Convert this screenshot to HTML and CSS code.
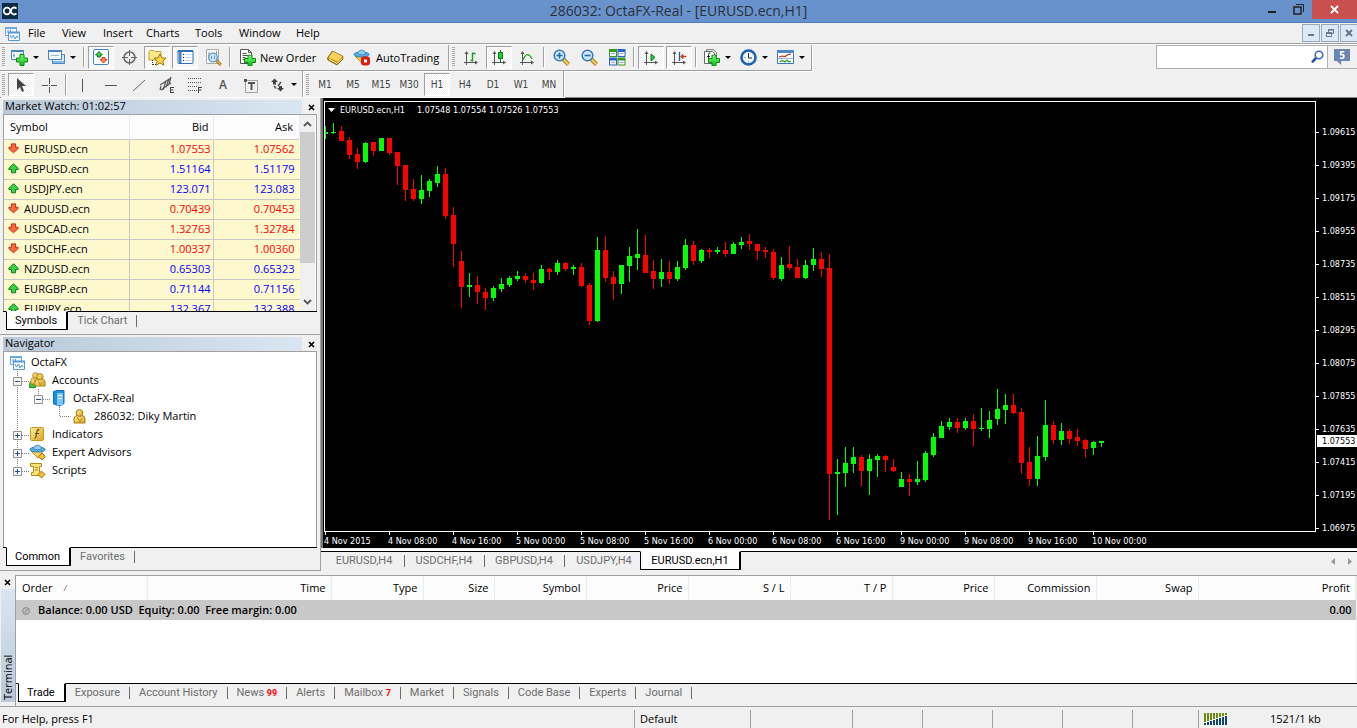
FILE: index.html
```html
<!DOCTYPE html>
<html lang="en">
<head>
<meta charset="utf-8">
<title>286032: OctaFX-Real - [EURUSD.ecn,H1]</title>
<link rel="stylesheet" href="styles.css">
</head>
<body>
<svg class="defs" aria-hidden="true">
  <defs>
    <linearGradient id="gold" x1="0" y1="0" x2="1" y2="1"><stop offset="0" stop-color="#fdf0a0"/><stop offset="1" stop-color="#d9a520"/></linearGradient>
    <linearGradient id="plusg" x1="0" y1="0" x2="0" y2="1"><stop offset="0" stop-color="#7dff70"/><stop offset="1" stop-color="#10b818"/></linearGradient>
    <symbol id="plus" viewBox="0 0 12 12"><path d="M4 .5h4V4h3.500v4H8v3.500H4V8H.5V4H4z" fill="url(#plusg)" stroke="#0a8a14"/></symbol>
    <symbol id="charts" viewBox="0 0 15 15"><path d="M.5 1.500h11v8H.5z" fill="#eef6fd" stroke="#6ea6de"/><path d="M0 2h12" stroke="#6ea6de" stroke-width="2"/><path d="M3 4v3M5.500 4v2" stroke="#5b96d6"/><path d="M3.500 6.500h11v8h-11z" fill="#f4f9fe" stroke="#5b96d6"/><path d="M3 6.500h12" stroke="#5b96d6" stroke-width="2"/><path d="M5 9l1.500 3 2-3 1.500 4 2-3 1 2" fill="none" stroke="#5b96d6"/></symbol>
    <symbol id="up" viewBox="0 0 11 11"><path d="M5.500.7l4.600 4.600v1.200H7.600v3.300H3.400V6.500H.9V5.300z" fill="#3ccf48" stroke="#0d7a1c"/></symbol>
    <symbol id="down" viewBox="0 0 11 11"><path d="M5.500 9.800L.9 5.600V4.300h2.500V.9h4.200v3.400h2.500v1.300z" fill="#ff6a3c" stroke="#b23210"/></symbol>
    <symbol id="axes" viewBox="0 0 16 16"><path d="M3.500 15V3M1 12.500h13" fill="none" stroke="#555"/><path d="M3.500 1L1.500 4h4zM15 12.500l-3-2v4z" fill="#555"/></symbol>
    <symbol id="lens" viewBox="0 0 17 17"><path d="M10 10l5.500 5.500" stroke="#a67d14" stroke-width="4"/><path d="M10 10l5.500 5.500" stroke="#f4d060" stroke-width="2"/><circle cx="6.500" cy="6.500" r="5.300" fill="#cdeafa" stroke="#3678bc" stroke-width="1.500"/></symbol>
    <symbol id="hat" viewBox="0 0 17 17"><path d="M2 7h12l-5 7z" fill="#f7d058" stroke="#b98a18"/><ellipse cx="8.500" cy="5.500" rx="7.500" ry="2.500" fill="#5cb2e6" stroke="#2a7cb4"/><path d="M4.500 5c0-5 8-5 8 0-2 1-6 1-8 0z" fill="#8ed0f4" stroke="#2a7cb4" stroke-width=".8"/></symbol>
    <symbol id="user" viewBox="0 0 13 15"><path d="M1 14V10q0-3 3-3.500h5q3 .5 3 3.500v4z" fill="url(#gold)" stroke="#a67c10"/><circle cx="6.500" cy="4" r="3.400" fill="url(#gold)" stroke="#a67c10"/><path d="M4 8l3 5 2-4" fill="none" stroke="#b98a18"/></symbol>
    <symbol id="x" viewBox="0 0 7 7"><path d="M1 1l5 5M6 1L1 6" stroke="currentColor" stroke-width="1.600"/></symbol>
  </defs>
</svg>

<header class="titlebar">
  <svg class="logo" viewBox="0 0 16 16" aria-hidden="true"><path d="M0 0h16v16H0z" fill="#0c2a42"/><circle cx="5" cy="8" r="3.300" fill="none" stroke="#fff" stroke-width="1.700"/><path d="M14.500 5.600a3.300 3.300 0 1 0 0 4.800" fill="none" stroke="#fff" stroke-width="1.700"/></svg>
  <h1>286032: OctaFX-Real - [EURUSD.ecn,H1]</h1>
  <div class="winbtns">
    <button aria-label="Minimize"><svg width="12" height="14" viewBox="0 0 12 14"><path d="M1 10h8v2H1z" fill="#222"/></svg></button>
    <button aria-label="Restore"><svg width="12" height="14" viewBox="0 0 12 14"><path d="M1 6h7v7H1z" fill="none" stroke="#222" stroke-width="1.500"/><path d="M3 3.500h7.500V11" fill="none" stroke="#222"/></svg></button>
    <button class="close" aria-label="Close"><svg width="9" height="9" viewBox="0 0 9 9"><path d="M1 1l7 7M8 1L1 8" stroke="#fff" stroke-width="1.800"/></svg></button>
  </div>
</header>

<nav class="menubar">
  <svg width="15" height="15"><use href="#charts"/></svg>
  <button class="m-file">File</button><button class="m-view">View</button><button class="m-insert">Insert</button><button class="m-charts">Charts</button><button class="m-tools">Tools</button><button class="m-window">Window</button><button>Help</button>
  <div class="mdi">
    <button aria-label="Minimize chart"><svg width="10" height="10"><path d="M2 6h6v2H2z" fill="#66788c"/></svg></button>
    <button aria-label="Restore chart"><svg width="10" height="10"><path d="M1.500 4.500h5v4h-5zM3.500 4V1.500h5v4H7" fill="none" stroke="#66788c"/><path d="M1 4h6v2H1zM3 1h6v1.500H3z" fill="#66788c"/></svg></button>
    <button aria-label="Close chart"><svg width="10" height="10"><path d="M2 2l6 6M8 2L2 8" stroke="#66788c" stroke-width="2"/></svg></button>
  </div>
</nav>

<div class="toolrow">
  <div class="group">
    <i class="grip"></i>
    <button class="split" aria-label="New chart"><svg width="17" height="17"><path d="M.5 1.500h12v9H.5z" fill="#f3f9fe" stroke="#4a83be"/><path d="M0 2h13" stroke="#4a83be" stroke-width="2"/><path d="M3 4.500v4M2 6.500h2M10 4v3" stroke="#6a9bd0"/><use href="#plus" x="5" y="5" width="12" height="12"/></svg><b class="arr"></b></button>
    <button class="split" aria-label="Profiles"><svg width="17" height="17"><path d="M4.500 5.500h12v9h-12z" fill="#d9eafa" stroke="#4a83be"/><path d="M5 13h11" stroke="#8bb8e4" stroke-width="2"/><path d="M.5 1.500h13v9H.5z" fill="#f3f9fe" stroke="#4a83be"/><path d="M0 2h14" stroke="#4a83be" stroke-width="2"/><path d="M3 6.500h8" stroke="#8bb8e4"/></svg><b class="arr"></b></button>
    <i class="sep"></i>
    <button class="tool on" aria-label="Market Watch"><svg width="17" height="17"><rect x=".5" y=".5" width="15" height="15" rx="1.500" fill="#fff" stroke="#3c86c8"/><path d="M6 2.500L2.500 6h2v2h3V6h2z" fill="#3ccf48" stroke="#0d7a1c"/><path d="M10.500 14L14 10.500h-2v-2H9v2H7z" fill="#ff8a5c" stroke="#c8401c"/></svg></button>
    <button class="tool" aria-label="Data Window"><svg width="17" height="17"><circle cx="8.500" cy="8.500" r="5.500" fill="none" stroke="#666" stroke-width="1.500"/><path d="M8.500 1v6M8.500 10v6M1 8.500h6M10 8.500h6" stroke="#666"/></svg></button>
    <button class="tool on" aria-label="Navigator"><svg width="19" height="17"><path d="M1 2.500l1-1h4l1 1h6V11H1z" fill="#fbe88c" stroke="#c9a02c"/><path d="M4.500 11v6M5 15.500h3" stroke="#333" stroke-dasharray="1 1"/><path d="M12 5l1.800 3.800 4.200.4-3.200 2.800 1 4.200L12 14l-3.800 2.200 1-4.200L6 9.200l4.200-.4z" fill="#ffd84a" stroke="#a07808"/></svg></button>
    <button class="tool on" aria-label="Terminal"><svg width="17" height="17"><rect x="1" y="1.500" width="15" height="13" rx="1" fill="#fff" stroke="#2d6fb4"/><path d="M1 2h15" stroke="#2d6fb4" stroke-width="2"/><path d="M2 3h2.500v11H2z" fill="#3e86cc"/><path d="M6 5.500h1M6 8.500h1M6 11.500h1" stroke="#222"/><path d="M8 5.500h6.500M8 8.500h6.500M8 11.500h6.500" stroke="#bcd8f2"/></svg></button>
    <button class="tool" aria-label="Strategy Tester"><svg width="17" height="17"><path d="M1.500.5h12v14h-12z" fill="#f8f8f8" stroke="#aaa"/><path d="M4 3v6M11.500 2v4M3 6h2" stroke="#999"/><path d="M11 11l5 5" stroke="#a67d14" stroke-width="3"/><path d="M11 11l5 5" stroke="#f4d060"/><circle cx="8" cy="8.500" r="4.300" fill="#cde6fa" stroke="#5a96d0" stroke-width="1.300"/><path d="M6.500 10V7M9.500 10V6.500" stroke="#5a96d0"/></svg></button>
    <i class="sep"></i>
    <button class="wide"><svg width="17" height="17"><path d="M1.500.5h8l3 3v11h-11z" fill="#fff" stroke="#555"/><path d="M9.500.5v3h3M3.500 4.500h4M3.500 6.500h6M3.500 8.500h3M3.500 10.500h2" fill="none" stroke="#555"/><use href="#plus" x="5" y="5.500" width="12" height="12"/></svg>New Order</button>
    <button class="tool" aria-label="MetaEditor"><svg width="17" height="17"><path d="M.5 9l5-7 10.500 5.500-.5 3-5.500 5.500-9-5z" fill="#c48a14" stroke="#946408"/><path d="M1.500 8.500l4.500-6 9.500 5-5 5z" fill="#fbd35c"/><path d="M2 10l8 4.500 5-5" fill="none" stroke="#fff3b8"/></svg></button>
    <button class="auto"><svg width="18" height="17"><use href="#hat" width="17" height="17"/><rect x="8" y="7.500" width="9" height="9" rx="3" fill="#d8200c"/><path d="M11 10.500h3v3h-3z" fill="#fff"/></svg>AutoTrading</button>
  </div>
  <div class="group">
    <i class="grip"></i>
    <button class="tool" aria-label="Bar Chart"><svg width="16" height="16"><use href="#axes"/><path d="M9.500 2.500v9M9.500 10.500H7.500M9.500 3.500h3" stroke="#1c9a28" stroke-width="1.400" fill="none"/></svg></button>
    <button class="tool on" aria-label="Candlesticks"><svg width="16" height="16"><use href="#axes"/><path d="M9.500 0v12" stroke="#0a7a14"/><path d="M7.500 2.500h4v6h-4z" fill="#22cc30" stroke="#0a7a14"/></svg></button>
    <button class="tool" aria-label="Line Chart"><svg width="16" height="16"><use href="#axes"/><path d="M4 10c3-7 6-7 9-1" stroke="#1c9a28" fill="none" stroke-width="1.200"/></svg></button>
    <i class="sep"></i>
    <button class="tool" aria-label="Zoom In"><svg width="17" height="17"><use href="#lens"/><path d="M3.500 6.500h6M6.500 3.500v6" stroke="#2468b0" stroke-width="1.600"/></svg></button>
    <button class="tool" aria-label="Zoom Out"><svg width="17" height="17"><use href="#lens"/><path d="M3.500 6.500h6" stroke="#2468b0" stroke-width="1.600"/></svg></button>
    <button class="tool" aria-label="Tile Windows"><svg width="17" height="17"><path d="M0 0h8v8H0zM8.500 8.500h8v8h-8z" fill="#3a9a1c"/><path d="M8.500 0h8v8h-8zM0 8.500h8v8H0z" fill="#2c62cc"/><path d="M1 3h6v4H1zM9.500 3h6v4h-6zM1 11.500h6v4H1zM9.500 11.500h6v4h-6z" fill="#f2f6fa"/><path d="M2 4.500h4M10.500 4.500h4M2 13.500h4M10.500 13.500h4" stroke="#9ab"/></svg></button>
    <i class="sep"></i>
    <button class="tool on" aria-label="Auto Scroll"><svg width="16" height="16"><use href="#axes"/><path d="M8 4l4 3.500L8 11z" fill="#28c838" stroke="#0a7a14"/></svg></button>
    <button class="tool on" aria-label="Chart Shift"><svg width="16" height="16"><use href="#axes"/><path d="M8.500 2v9" stroke="#1a64a8" stroke-width="1.400"/><path d="M9.500 6.500L12 4v2h3v1h-3v2z" fill="#c8401c" stroke="#c8401c" stroke-width=".6"/></svg></button>
    <i class="sep"></i>
    <button class="split" aria-label="Indicators"><svg width="17" height="17"><path d="M3.500.5h7l3 3v9h-10z" fill="#ddd" stroke="#888"/><path d="M1.500 2.500h8l2 2v10h-10z" fill="#fff" stroke="#666"/><path d="M7.500 4q-2-1-2 2v5M4 7.500h3" fill="none" stroke="#333"/><use href="#plus" x="5" y="5.500" width="12" height="12"/></svg><b class="arr"></b></button>
    <button class="split" aria-label="Periods"><svg width="17" height="17"><circle cx="8.500" cy="8.500" r="7" fill="#eef5fb" stroke="#1c62b4" stroke-width="2.600"/><path d="M8.500 4v5h3.500" fill="none" stroke="#333"/><path d="M4.500 8.500h1M8.500 12.500v1" stroke="#777"/></svg><b class="arr"></b></button>
    <button class="split" aria-label="Templates"><svg width="17" height="17"><path d="M.5 1.500h16v13H.5z" fill="#fff" stroke="#3c78b4"/><path d="M0 2.500h17" stroke="#4a8ac8" stroke-width="3"/><path d="M2 8l3-1 3 .5 3-2 3-.5" fill="none" stroke="#b03018" stroke-width="1.200"/><path d="M1 9.500h15" stroke="#9ab8d4"/><path d="M3 13l2-1.500 3 1.500 2-2 2 2 2-1" fill="none" stroke="#2c9a30" stroke-width="1.200"/></svg><b class="arr"></b></button>
  </div>
  <div class="search">
    <input type="text" aria-label="Search">
    <svg width="13" height="13" aria-hidden="true"><circle cx="8" cy="5" r="3.800" fill="#fff" stroke="#3e68c0" stroke-width="1.600"/><path d="M5 8l-4 4.300" stroke="#2c50b8" stroke-width="2.600"/></svg>
    <button class="chat" aria-label="Community messages"><span>5</span></button>
  </div>
</div>

<div class="toolrow second">
  <div class="group">
    <i class="grip"></i>
    <button class="tool on" aria-label="Cursor"><svg width="16" height="16"><path d="M4 1v12l3-3 2 5 2-1-2-5h4z" fill="#444"/></svg></button>
    <button class="tool" aria-label="Crosshair"><svg width="16" height="16"><path d="M8.500 1v6M8.500 10v6M1 8.500h6M10 8.500h6M8 8.500h1" stroke="#555"/></svg></button>
    <i class="sep"></i>
    <button class="tool" aria-label="Vertical Line"><svg width="16" height="16"><path d="M7.500 2v13" stroke="#555"/></svg></button>
    <button class="tool" aria-label="Horizontal Line"><svg width="16" height="16"><path d="M2 8.500h12" stroke="#555"/></svg></button>
    <button class="tool" aria-label="Trendline"><svg width="16" height="16"><path d="M2 14L14 3" stroke="#666"/></svg></button>
    <button class="tool" aria-label="Equidistant Channel"><svg width="16" height="18"><path d="M1 9L12 2M2 14l10-7M4 14L7 5M7 11l3-8M10 8l2-7M2 10l-1 4" stroke="#555" stroke-width="1.200"/><path d="M11.500 11.500V17M11 11.500h4M11 14h3.500M11 16.500h4" stroke="#444"/></svg></button>
    <button class="tool" aria-label="Fibonacci Retracement"><svg width="16" height="18"><path d="M1 2.500h14M1 6.500h14M1 10.500h9M1 14.500h9" stroke="#555" stroke-dasharray="1 1"/><path d="M11.500 11V17M11 11.500h4M11 14h3.500" stroke="#444"/></svg></button>
    <button class="tool letter">A</button>
    <button class="tool" aria-label="Text Label"><svg width="16" height="16"><path d="M2.500 3.500h12v12h-12z" fill="none" stroke="#555" stroke-dasharray="1 1"/><path d="M1 2h3v3H1z" fill="#555"/><path d="M5 6h7M8.500 6v7" stroke="#555" stroke-width="2"/></svg></button>
    <button class="split" aria-label="Arrows"><svg width="17" height="16"><path d="M5.500 1.500L9 5H7v2.500H4V5H2zM11.500 14.500L8 11h2V9h3v2h2z" fill="#444"/><path d="M5 9l2 2.500M9 9l3-4" fill="none" stroke="#555" stroke-width="1.600"/></svg><b class="arr"></b></button>
  </div>
  <div class="group frames">
    <i class="grip"></i>
    <button class="tool">M1</button><button class="tool">M5</button><button class="tool">M15</button><button class="tool">M30</button><button class="tool on">H1</button><button class="tool">H4</button><button class="tool">D1</button><button class="tool">W1</button><button class="tool">MN</button>
  </div>
</div>

<main class="work">
  <aside class="side">
    <section class="panel">
      <div class="cap"><h2>Market Watch: 01:02:57</h2><button aria-label="Close Market Watch"><svg width="7" height="7"><use href="#x"/></svg></button></div>
      <div class="frame watch">
        <table>
          <colgroup><col class="c-sym"><col class="c-bid"><col></colgroup>
          <thead><tr><th>Symbol</th><th>Bid</th><th>Ask</th></tr></thead>
          <tbody>
            <tr class="dn"><td><svg width="11" height="11"><use href="#down"/></svg>EURUSD.ecn</td><td>1.07553</td><td>1.07562</td></tr>
            <tr><td><svg width="11" height="11"><use href="#up"/></svg>GBPUSD.ecn</td><td>1.51164</td><td>1.51179</td></tr>
            <tr><td><svg width="11" height="11"><use href="#up"/></svg>USDJPY.ecn</td><td>123.071</td><td>123.083</td></tr>
            <tr class="dn"><td><svg width="11" height="11"><use href="#down"/></svg>AUDUSD.ecn</td><td>0.70439</td><td>0.70453</td></tr>
            <tr class="dn"><td><svg width="11" height="11"><use href="#down"/></svg>USDCAD.ecn</td><td>1.32763</td><td>1.32784</td></tr>
            <tr class="dn"><td><svg width="11" height="11"><use href="#down"/></svg>USDCHF.ecn</td><td>1.00337</td><td>1.00360</td></tr>
            <tr><td><svg width="11" height="11"><use href="#up"/></svg>NZDUSD.ecn</td><td>0.65303</td><td>0.65323</td></tr>
            <tr><td><svg width="11" height="11"><use href="#up"/></svg>EURGBP.ecn</td><td>0.71144</td><td>0.71156</td></tr>
            <tr><td><svg width="11" height="11"><use href="#up"/></svg>EURJPY.ecn</td><td>132.367</td><td>132.388</td></tr>
          </tbody>
        </table>
        <div class="scroll" aria-hidden="true"><svg width="9" height="6"><path d="M1 5l3.500-3.500L8 5" fill="none" stroke="#555" stroke-width="1.800"/></svg><span></span><svg width="9" height="6"><path d="M1 1l3.500 3.500L8 1" fill="none" stroke="#555" stroke-width="1.800"/></svg></div>
      </div>
      <div class="tabs"><button class="act">Symbols</button><button>Tick Chart</button></div>
    </section>
    <section class="panel grow">
      <div class="cap"><h2>Navigator</h2><button aria-label="Close Navigator"><svg width="7" height="7"><use href="#x"/></svg></button></div>
      <div class="frame tree">
        <ul>
          <li><svg class="ico0" width="15" height="15"><use href="#charts"/></svg>OctaFX</li>
          <li><svg width="25" height="18"><path d="M13.500 0v18M18 10.500h7" class="dots"/><path d="M9.500 6.500h8v8h-8z" class="box"/><path d="M11 10.500h5" class="sign"/></svg><svg class="ico" width="17" height="17"><path d="M.5 15.500v-3q0-3 3-3.500h3v6.500z" fill="#3cc83c" stroke="#1c8a1c"/><use href="#user" x="1" y="0" width="11" height="13"/><use href="#user" x="5" y="0" width="12" height="16"/></svg>Accounts</li>
          <li><svg width="46" height="18"><path d="M13.500 0v18M34.500 0v7M39 10.500h7" class="dots"/><path d="M30.500 6.500h8v8h-8z" class="box"/><path d="M32 10.500h5" class="sign"/></svg><svg class="ico" width="17" height="17"><path d="M3.500 1.500L7 .5h7v13l-4 2.500-6.500-2z" fill="#1c90e0" stroke="#1470b4"/><path d="M7 3h6v12l-6 .5z" fill="#7cc8f8"/><path d="M8 5.500h4M8 8.500h4" stroke="#fff"/></svg>OctaFX-Real</li>
          <li><svg width="67" height="18"><path d="M13.500 0v18M55.500 0v9.500h11" class="dots"/></svg><svg class="ico" width="17" height="17"><use href="#user" x="2" y="1" width="13" height="15"/></svg>286032: Diky Martin</li>
          <li><svg width="25" height="18"><path d="M13.500 0v18M18 10.500h7" class="dots"/><path d="M9.500 6.500h8v8h-8z" class="box"/><path d="M11 10.500h5M13.500 8v5" class="sign"/></svg><svg class="ico" width="17" height="17"><rect x="1.500" y="1.500" width="13" height="13" rx="1" fill="url(#gold)" stroke="#c89820"/><path d="M10.500 4q-2-1-2.500 1.500l-1 5q-.3 2-1.500 1.500M6 7.500h4" fill="none" stroke="#6a4a00" stroke-width="1.200"/></svg>Indicators</li>
          <li><svg width="25" height="18"><path d="M13.500 0v18M18 10.500h7" class="dots"/><path d="M9.500 6.500h8v8h-8z" class="box"/><path d="M11 10.500h5M13.500 8v5" class="sign"/></svg><svg class="ico" width="17" height="17"><use href="#hat" width="17" height="17"/><path d="M13 9l3.500 3.500L13 16l-3.500-3.500z" fill="#f0bc3c" stroke="#a87810"/></svg>Expert Advisors</li>
          <li><svg width="25" height="18"><path d="M13.500 0v7M18 10.500h7" class="dots"/><path d="M9.500 6.500h8v8h-8z" class="box"/><path d="M11 10.500h5M13.500 8v5" class="sign"/></svg><svg class="ico" width="17" height="17"><path d="M1.500 1.500h11v3h-2v6h2v3h-10v-3h2v-6h-3z" fill="#fbe07c" stroke="#b98a18"/><path d="M6 5.500h3M6 8h3" stroke="#b98a18"/><path d="M12.500 9l3.500 3.500-3.500 3.500L9 12.500z" fill="#f0bc3c" stroke="#a87810"/></svg>Scripts</li>
        </ul>
      </div>
      <div class="tabs"><button class="act">Common</button><button>Favorites</button></div>
    </section>
  </aside>

  <section class="chartcol">
    <div class="chart">
      <div class="plot">
        <svg id="candles" width="990" height="429" shape-rendering="crispEdges" role="img" aria-label="EURUSD hourly candlesticks"></svg>
        <div class="legend"><svg width="7" height="4"><path d="M0 0h7L3.500 4z" fill="#fff"/></svg><span class="pair">EURUSD.ecn,H1</span><span>1.07548 1.07554 1.07526 1.07553</span></div>
      </div>
      <div class="prices"><span>1.09615</span><span>1.09395</span><span>1.09175</span><span>1.08955</span><span>1.08735</span><span>1.08515</span><span>1.08295</span><span>1.08075</span><span>1.07855</span><span>1.07635</span><span>1.07415</span><span>1.07195</span><span>1.06975</span><b>1.07553</b></div>
      <div class="times"><span>4 Nov 2015</span><span>4 Nov 08:00</span><span>4 Nov 16:00</span><span>5 Nov 00:00</span><span>5 Nov 08:00</span><span>5 Nov 16:00</span><span>6 Nov 00:00</span><span>6 Nov 08:00</span><span>6 Nov 16:00</span><span>9 Nov 00:00</span><span>9 Nov 08:00</span><span>9 Nov 16:00</span><span>10 Nov 00:00</span></div>
    </div>
    <div class="tabs charttabs"><button>EURUSD,H4</button><button>USDCHF,H4</button><button>GBPUSD,H4</button><button>USDJPY,H4</button><button class="act">EURUSD.ecn,H1</button>
      <div class="pager"><button aria-label="Previous tabs"><svg width="4" height="7"><path d="M4 0v7L0 3.500z" fill="#999"/></svg></button><button aria-label="Next tabs"><svg width="4" height="7"><path d="M0 0v7l4-3.500z" fill="#999"/></svg></button></div>
    </div>
  </section>
</main>

<section class="terminal">
  <div class="strip"><button aria-label="Close Terminal"><svg width="7" height="7"><use href="#x"/></svg></button><h2>Terminal</h2></div>
  <div class="termbody">
    <div class="orders">
      <table>
        <colgroup><col class="o-order"><col class="o-time"><col class="o-type"><col class="o-size"><col class="o-type"><col class="o-num"><col class="o-num"><col class="o-num"><col class="o-num"><col class="o-num"><col class="o-num"><col></colgroup>
        <thead><tr><th>Order <svg width="5" height="8"><path d="M1 7l3-6" stroke="#888"/></svg></th><th>Time</th><th>Type</th><th>Size</th><th>Symbol</th><th>Price</th><th>S / L</th><th>T / P</th><th>Price</th><th>Commission</th><th>Swap</th><th>Profit</th></tr></thead>
        <tbody><tr><td colspan="11"><svg width="8" height="8"><circle cx="4" cy="4" r="3.400" fill="#bbb" stroke="#888"/><path d="M2.500 5.500l3-3" stroke="#888"/></svg>Balance: 0.00 USD&nbsp; Equity: 0.00&nbsp; Free margin: 0.00</td><td>0.00</td></tr></tbody>
      </table>
    </div>
    <div class="tabs"><button class="act">Trade</button><button>Exposure</button><button>Account History</button><button>News <em>99</em></button><button>Alerts</button><button>Mailbox <em>7</em></button><button>Market</button><button>Signals</button><button>Code Base</button><button>Experts</button><button>Journal</button></div>
  </div>
</section>

<footer class="status">
  <span class="help">For Help, press F1</span><span class="s116">Default</span><span class="s102"></span><span class="s71"></span><span class="s71"></span><span class="s71"></span><span class="s71"></span><span class="s66"></span>
  <span class="net"><svg width="24" height="13" shape-rendering="crispEdges"><path d="M0 0h2v9H0zM3 0h2v8H3zM6 0h2v7H6zM9 0h2v6H9zM12 0h2v5h-2zM15 0h2v4h-2zM18 0h2v3h-2zM21 0h2v2h-2z" fill="#6b8a14"/><path d="M0 10h2v2H0zM3 9h2v3H3zM6 8h2v4H6zM9 7h2v5H9zM12 6h2v6h-2zM15 5h2v7h-2zM18 4h2v8h-2zM21 3h2v9h-2z" fill="#12466a"/></svg>1521/1 kb</span>
</footer>
<script src="chart.js"></script>
</body>
</html>
```

FILE: styles.css
```css
* { box-sizing: border-box; }
body {
  margin: 0;
  height: 100vh;
  display: flex;
  flex-direction: column;
  overflow: hidden;
  background: #f0f0f0;
  color: #000;
  font: 11px/16px "Open Sans", "Noto Sans", sans-serif;
}
h1, h2 { margin: 0; font: inherit; }
svg { display: block; flex: none; }
button {
  font: inherit;
  color: inherit;
  background: none;
  border: 0;
  padding: 0;
  margin: 0;
  white-space: nowrap;
}
.defs { position: absolute; width: 0; height: 0; }

/* Title bar */
.titlebar {
  display: grid;
  grid-template-columns: 110px 1fr 110px;
  height: 23px;
  flex: none;
  background: #6892cc;
  border-bottom: 1px solid #507cb8;
}
.logo { width: 16px; height: 16px; margin: 3px 2px; }
.titlebar h1 { text-align: center; font-size: 14px; line-height: 22px; color: #2a2f3a; }
.winbtns { display: flex; justify-content: flex-end; align-items: flex-start; }
.winbtns button { width: 26px; height: 16px; display: grid; place-items: center; }
.winbtns .close { width: 45px; height: 19px; background: #c8504f; }

/* Menu */
.menubar {
  display: flex;
  align-items: center;
  height: 21px;
  flex: none;
  padding-left: 5px;
  border-bottom: 1px solid #a0a0a0;
  box-shadow: 0 1px #fff;
}
.menubar > svg { margin-right: 8px; }
.menubar > button { text-align: left; }
.m-file { width: 34px; }
.m-view { width: 41px; }
.m-insert { width: 43px; }
.m-charts { width: 49px; }
.m-tools { width: 44px; }
.m-window { width: 57px; }
.mdi { display: flex; gap: 1px; margin-left: auto; }
.mdi button {
  width: 18px;
  height: 18px;
  border: 1px solid #9aa7b6;
  background: #dbe8f5;
  display: grid;
  place-items: center;
}
.mdi button:last-child { width: 17px; border-right: 0; }

/* Toolbars */
.toolrow {
  display: flex;
  height: 27px;
  flex: none;
  padding-top: 1px;
}
.toolrow.second { padding-top: 0; border-bottom: 1px solid #888; }
.group {
  display: flex;
  gap: 2px;
  padding: 1px 2px 1px 2px;
  border-right: 1px solid #a0a0a0;
  border-bottom: 1px solid #a0a0a0;
  box-shadow: 1px 1px #fff;
}
.second .group { border-bottom: 0; padding: 2px 1px 0 2px; }
.toolrow .group + .group { padding-left: 3px; }
.grip {
  width: 3px;
  margin: 1px 1px 2px 0;
  background: repeating-linear-gradient(#aaa 0 1px, #f0f0f0 1px 2px);
}
.sep { width: 4px; margin: 1px 0 2px; background: linear-gradient(90deg, #f0f0f0 1px, #a0a0a0 1px 2px, #fff 2px 3px, #f0f0f0 3px); }
.tool { width: 26px; height: 23px; display: grid; place-items: center; color: #444; }
.on {
  background: repeating-conic-gradient(#fff 0 25%, #f0f0f0 0 50%) 0 0 / 2px 2px;
  border: 1px solid #fff;
  border-top-color: #a0a0a0;
  border-left-color: #a0a0a0;
}
.split { width: 35px; height: 23px; display: flex; align-items: center; gap: 5px; padding-left: 3px; }
.arr { border: solid transparent; border-width: 3px 3px 0; border-top-color: #000; width: 6px; }
.wide, .auto { display: flex; align-items: center; height: 23px; }
.wide { width: 86px; padding-left: 5px; gap: 4px; }
.auto { width: 96px; padding-left: 3px; gap: 5px; }
.letter { font-size: 12px; font-weight: 600; color: #555; }
.frames .tool { font: 10px/16px "DejaVu Sans Condensed", "Open Sans", sans-serif; }

.search { display: flex; margin-left: auto; width: 201px; height: 24px; position: relative; }
.search input { flex: 1; min-width: 0; border: 1px solid #b0b0b0; background: #fff; padding: 0 24px 0 4px; font: inherit; }
.search > svg { position: absolute; right: 33px; top: 5px; }
.chat { width: 29px; border: 1px solid #b0b0b0; border-width: 1px 0; padding-left: 6px; text-align: left; }
.chat span {
  display: block;
  width: 16px;
  height: 16px;
  background: #6b86b4;
  clip-path: polygon(0 0, 100% 0, 100% 75%, 45% 75%, 45% 100%, 18% 75%, 0 75%);
  color: #fff;
  font-weight: 700;
  font-size: 10px;
  line-height: 12px;
  text-align: center;
}

/* Side panels */
.work { display: flex; flex: 1; min-height: 0; }
.side { width: 321px; flex: none; display: flex; flex-direction: column; border-right: 1px solid #a0a0a0; }
.panel { display: flex; flex-direction: column; padding: 2px 3px 4px; border-bottom: 1px solid #a0a0a0; }
.grow { flex: 1; min-height: 0; }
.cap { display: flex; height: 14px; align-items: center; }
.cap h2 { flex: 1; padding: 0 0 2px 2px; line-height: 12px; background: linear-gradient(90deg, #b9c9d9, #d9e6f2); }
.cap button { width: 15px; padding-left: 3px; display: grid; place-items: center; }
.frame { border: 1px solid #a0a0a0; border-bottom: 0; background: #fff; flex: 1; overflow: hidden; }
.watch { display: flex; flex: 0 0 197px; }
.watch table { flex: 1; height: max-content; border-collapse: collapse; table-layout: fixed; }
.c-sym { width: 125px; }
.c-bid { width: 84px; }
.watch th { height: 24px; padding: 0 4px; font-weight: 400; text-align: right; background: #fcfcfd; border-right: 1px solid #e4eef8; }
.watch th:first-child { text-align: left; padding-left: 6px; }
.watch th:last-child { padding-right: 6px; }
.watch td { height: 20px; padding: 0 2px; text-align: right; background: #fef8cf; border: 1px solid #c8c8c8; border-width: 1px 1px 1px 0; color: #00f; line-height: 18px; }
.watch td:last-child { border-right: 0; padding-right: 5px; }
.watch td:first-child { text-align: left; color: #000; padding-left: 4px; }
.watch td svg { display: inline-block; vertical-align: -1px; margin-right: 5px; }
.watch .dn td + td { color: #f00; }
.scroll { width: 15px; margin-right: 1px; background: #f0f0f0; display: flex; flex-direction: column; align-items: center; padding: 6px 0; }
.scroll span { width: 15px; height: 131px; margin-top: 5px; background: #cdcdcd; }
.scroll svg:last-child { margin-top: auto; }

.tree ul { list-style: none; margin: 0; padding: 1px 0 0; }
.tree li { display: flex; align-items: center; height: 18px; }
.ico0 { margin: 0 6px; }
.ico { margin-right: 6px; }
.dots { fill: none; stroke: #808080; stroke-dasharray: 1 1; }
.box { fill: #f8f8f8; stroke: #919191; }
.sign { stroke: #2c4c9c; }

/* Tabs */
.tabs {
  display: flex;
  height: 19px;
  flex: none;
  border-top: 1px solid #000;
  padding-left: 3px;
  color: #6d6d6d;
  font-family: Roboto, "Open Sans", sans-serif;
}
.tabs > button {
  height: 18px;
  padding: 0 10px 0 9px;
  background: linear-gradient(#6d6d6d, #6d6d6d) right 3px / 1px 12px no-repeat;
}
.tabs > .act {
  color: #000;
  height: 19px;
  margin-top: -1px;
  padding: 0 9px 0 8px;
  background: #fff;
  border: 1px solid #000;
  border-top-color: #fff;
  border-right-width: 2px;
}
.tabs em { color: #f00; font-weight: 700; font-style: normal; font-size: 9px; }

/* Chart */
.chartcol { flex: 1; min-width: 0; display: flex; flex-direction: column; }
.chart {
  flex: 1;
  min-height: 0;
  display: grid;
  grid-template: minmax(0, 1fr) 16px / minmax(0, 1fr) 41px;
  padding: 3px 0 0 1px;
  background: #000;
  border-left: 2px solid #777;
  color: #fff;
  font: 9px/12px "DejaVu Sans Condensed", "Open Sans", sans-serif;
}
.plot { border: 1px solid #fff; position: relative; overflow: hidden; }
.legend { position: absolute; left: 3px; top: 2px; display: flex; align-items: center; gap: 5px; }
.pair { margin-right: 7px; }
.prices { position: relative; padding-top: 15px; white-space: nowrap; }
.prices span { display: block; height: 33px; line-height: 33px; padding-left: 6px; background: linear-gradient(#fff, #fff) 0 16px / 3px 1px no-repeat; }
.prices b { position: absolute; left: 1px; right: 0; top: 334px; height: 12px; padding-left: 5px; background: #fff; color: #000; font-weight: 400; }
.times { grid-column: 1 / 3; display: flex; }
.times span { width: 64px; flex: none; padding-top: 3px; background: linear-gradient(#fff, #fff) 1px 0 / 1px 3px no-repeat; white-space: nowrap; }
.charttabs { box-shadow: 0 -2px #fff; height: 20px; margin-top: 3px; padding-left: 4px; }
.charttabs > button { width: 80px; padding: 0 2px 0 0; }
.charttabs > .act { width: 101px; padding: 0; margin-left: -5px; }
.pager { margin-left: auto; display: flex; gap: 13px; padding-right: 5px; }

/* Terminal */
.terminal { flex: none; display: flex; border-bottom: 1px solid #a0a0a0; padding-top: 4px; }
.strip { width: 15px; display: flex; flex-direction: column; align-items: center; padding-bottom: 4px; }
.strip button { height: 14px; padding-right: 1px; display: grid; place-items: center; }
.strip h2 {
  flex: 1;
  width: 14px;
  padding-top: 2px;
  line-height: 14px;
  writing-mode: vertical-rl;
  transform: rotate(180deg);
  background: linear-gradient(#b9c9d9, #d9e6f2);
}
.termbody { flex: 1; min-width: 0; border-left: 1px solid #a0a0a0; border-top: 1px solid #a0a0a0; }
.orders { height: 107px; background: #fff; margin-right: 1px; }
.orders table { width: 100%; border-collapse: collapse; table-layout: fixed; }
.o-order { width: 131px; }
.o-time { width: 184px; }
.o-type { width: 92px; }
.o-size { width: 71px; }
.o-num { width: 102px; }
.orders th { height: 24px; padding: 0 5px; font-weight: 400; text-align: right; background: #fcfcfd; border-right: 1px solid #e4eef8; }
.orders th:first-child { text-align: left; padding-left: 6px; }
.orders th svg { display: inline-block; margin-left: 8px; }
.orders td { height: 20px; padding: 0 4px 0 6px; background: #c8c8c8; font-weight: 600; }
.orders td:last-child { text-align: right; }
.orders td svg { display: inline-block; margin-right: 8px; vertical-align: -1px; }
.termbody .tabs { height: 23px; padding-left: 2px; }

/* Status bar */
.status { flex: none; display: flex; height: 21px; padding-top: 3px; line-height: 18px; }
.status span + span { border-left: 1px solid #a0a0a0; padding-left: 5px; }
.help { flex: 1; padding-left: 2px; }
.s116 { width: 116px; }
.s102 { width: 102px; }
.s71 { width: 70px; }
.s66 { width: 66px; }
.net { width: 159px; display: flex; align-items: center; gap: 42px; }
```

FILE: chart.js
```js
// Each candle: direction (1 up, 0 down), high, open/close top, open/close bottom, low.
const candles = [
[1,126,132,134,139],[1,123,132,133,134],[0,126,131,141,141],[0,137,140,155,159],[0,148,154,162,169],[1,142,143,162,163],[0,142,142,151,156],[1,138,138,151,151],
[0,138,138,153,155],[0,152,152,166,185],[0,165,165,190,201],[0,179,189,199,201],[1,175,190,199,204],[1,179,181,191,197],[1,166,174,183,187],[0,168,174,216,219],
[0,207,215,244,267],[0,251,261,287,308],[1,273,285,287,297],[0,276,285,292,304],[0,288,292,298,310],[1,286,288,298,301],[1,278,284,289,292],[1,276,278,285,287],
[1,271,276,279,281],[0,273,276,280,283],[0,273,280,283,290],[1,265,269,283,284],[0,268,269,272,280],[1,260,263,272,275],[0,262,263,269,271],[1,265,267,269,275],
[0,263,267,286,287],[0,283,285,321,325],[1,237,250,321,322],[0,236,250,278,282],[0,271,277,284,300],[1,265,265,284,294],[1,247,256,266,282],[1,229,254,258,270],
[0,235,255,273,273],[0,260,271,279,289],[1,259,272,279,287],[0,261,272,279,284],[1,261,267,279,281],[1,239,245,268,270],[0,241,245,261,265],[1,249,250,261,263],
[0,248,250,252,258],[1,247,250,252,254],[0,242,250,254,257],[1,242,244,254,254],[1,237,242,245,249],[0,234,241,244,250],[0,244,244,251,260],[0,247,250,252,258],
[0,249,252,278,280],[1,257,265,279,281],[0,246,264,268,270],[0,259,267,278,278],[1,260,265,278,279],[1,248,259,265,271],[0,252,259,269,277],[0,254,268,474,520],
[1,459,472,474,515],[1,447,463,473,487],[1,447,457,464,473],[0,455,457,471,486],[1,454,459,471,495],[1,454,456,460,477],[0,455,456,460,472],[0,459,467,471,472],
[1,472,479,487,487],[0,474,479,482,496],[1,461,479,482,485],[1,451,453,480,482],[1,433,437,455,457],[1,421,426,438,438],[1,418,422,427,430],[0,418,422,428,433],
[1,418,421,428,430],[0,414,421,429,446],[1,408,428,429,431],[1,411,420,429,438],[1,389,409,419,425],[1,394,405,410,424],[0,394,405,413,414],[0,408,412,463,474],
[0,447,462,479,486],[1,436,456,479,486],[1,400,425,457,461],[0,421,425,440,444],[1,423,431,440,445],[0,429,431,439,444],[0,429,437,441,446],[0,439,440,449,458],
[1,441,442,448,455],[1,441,441,443,447]
];
const STEP = 8, TOP = 102;
const paths = ["", ""];
candles.forEach(([up, high, top, bottom, low], i) => {
  const x = i * STEP;
  paths[up] += `M${x} ${high - TOP}h1V${low - TOP}h-1zM${x - 2} ${top - TOP}h5V${bottom - TOP}h-5z`;
});
document.getElementById("candles").innerHTML =
  `<path d="${paths[0]}" fill="#f00"/><path d="${paths[1]}" fill="#0f0"/>`;
```
